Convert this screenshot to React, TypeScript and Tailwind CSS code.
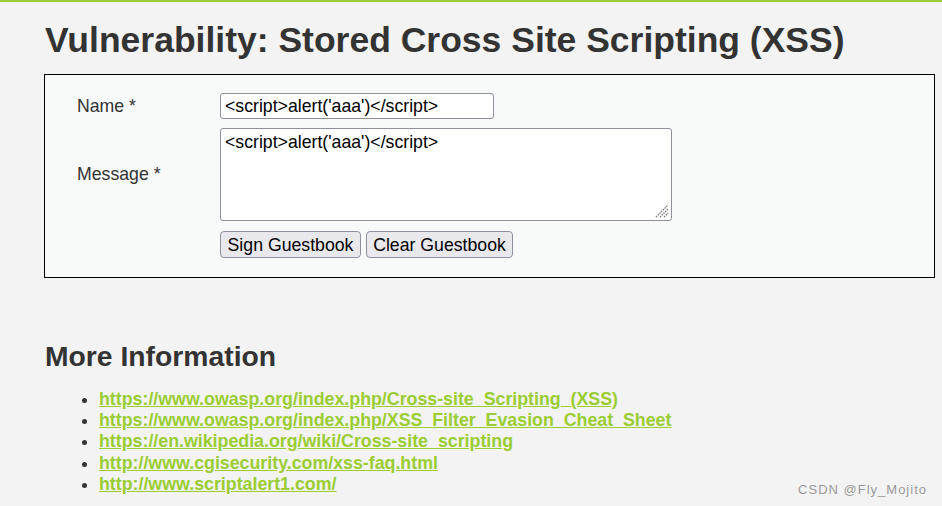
const links = [
  'https://www.owasp.org/index.php/Cross-site_Scripting_(XSS)',
  'https://www.owasp.org/index.php/XSS_Filter_Evasion_Cheat_Sheet',
  'https://en.wikipedia.org/wiki/Cross-site_scripting',
  'http://www.cgisecurity.com/xss-faq.html',
  'http://www.scriptalert1.com/',
];

const payload = "<script>alert('aaa')</script>";

function Resizer() {
  return (
    <svg className="pointer-events-none absolute right-[3px] bottom-[3px]" width="16" height="16" viewBox="0 0 16 16">
      <g stroke="#7a7a7a" strokeWidth="1.3" strokeDasharray="1.6 0.8">
        <line x1="3" y1="15" x2="15" y2="3" />
        <line x1="7" y1="15" x2="15" y2="7" />
        <line x1="11" y1="15" x2="15" y2="11" />
      </g>
    </svg>
  );
}

export default function App() {
  return (
    <div className="relative min-h-[506px] w-[942px] bg-[#f3f3f3] text-[#333] font-['Liberation_Sans',Arial,sans-serif]">
      <div className="h-[2px] bg-[#9ecb3a]" />

      <div className="pl-[45px] pr-[8px]">
        <h1 className="mt-[18px] text-[35.5px] font-bold leading-[40px]">
          Vulnerability: Stored Cross Site Scripting (XSS)
        </h1>

        {/* form area */}
        <div className="mt-[14px] ml-[-1px] w-[891px] border border-black bg-[#f8f9f9] pt-[18px] pb-[19px] pl-[32px]">
          <div className="grid grid-cols-[143px_1fr] gap-y-[9px] text-[17.7px]">
            <div className="flex items-center leading-[20px]">Name *</div>
            <input
              readOnly
              value={payload}
              className="h-[26px] w-[274px] rounded-[3px] border border-[#8f8f9d] bg-white px-[4px] text-[17.7px] text-black outline-none"
            />

            <div className="flex items-center pb-[2px] leading-[20px]">Message *</div>
            <div className="relative h-[93px] w-[452px]">
              <textarea
                readOnly
                value={payload}
                className="h-full w-full resize-none rounded-[3px] border border-[#8f8f9d] bg-white px-[4px] pt-[3px] text-[17.7px] leading-[20px] text-black outline-none"
              />
              <Resizer />
            </div>

            <div />
            <div className="mt-[1px] flex gap-[5px]">
              <button className="h-[27px] w-[141px] rounded-[4px] border border-[#8f8f9d] bg-[#e9e9ed] text-[17.7px] leading-[20px] text-black">
                Sign Guestbook
              </button>
              <button className="h-[27px] w-[147px] rounded-[4px] border border-[#8f8f9d] bg-[#e9e9ed] text-[17.7px] leading-[20px] text-black">
                Clear Guestbook
              </button>
            </div>
          </div>
        </div>

        <h2 className="mt-[62px] text-[28.3px] font-bold leading-[32px]">More Information</h2>

        <ul className="mt-[17px] list-disc pl-[54px] text-[17.8px] leading-[21.2px]">
          {links.map((href) => (
            <li key={href}>
              <a href={href} className="font-bold text-[#9acd32] underline">
                {href}
              </a>
            </li>
          ))}
        </ul>
      </div>

      <div className="absolute right-[15px] bottom-[7px] text-[13px] tracking-[1px] text-[#9a9a9a]">
        CSDN @Fly_Mojito
      </div>
    </div>
  );
}
